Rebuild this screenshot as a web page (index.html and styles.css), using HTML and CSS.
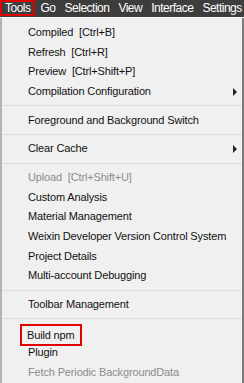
FILE: index.html
```html
<!DOCTYPE html>
<html lang="en">
<head>
    <meta charset="UTF-8">
    <title>Tools menu</title>
    <link rel="stylesheet" href="styles.css">
</head>
<body>
    <div class="menubar">
        <span class="menubar-item marked">Tools</span>
        <span class="menubar-item">Go</span>
        <span class="menubar-item">Selection</span>
        <span class="menubar-item">View</span>
        <span class="menubar-item">Interface</span>
        <span class="menubar-item">Settings</span>
    </div>

    <div class="menu">
        <div class="item">Compiled&nbsp; [Ctrl+B]</div>
        <div class="item">Refresh&nbsp; [Ctrl+R]</div>
        <div class="item">Preview&nbsp; [Ctrl+Shift+P]</div>
        <div class="item sub">Compilation Configuration</div>
        <div class="sep"></div>
        <div class="item">Foreground and Background Switch</div>
        <div class="sep"></div>
        <div class="item sub">Clear Cache</div>
        <div class="sep"></div>
        <div class="item disabled">Upload&nbsp; [Ctrl+Shift+U]</div>
        <div class="item">Custom Analysis</div>
        <div class="item">Material Management</div>
        <div class="item">Weixin Developer Version Control System</div>
        <div class="item">Project Details</div>
        <div class="item">Multi-account Debugging</div>
        <div class="sep"></div>
        <div class="item">Toolbar Management</div>
        <div class="sep"></div>
        <div class="item"><span class="marked">Build npm</span></div>
        <div class="item">Plugin</div>
        <div class="item disabled">Fetch Periodic BackgroundData</div>
    </div>
</body>
</html>
```

FILE: styles.css
```css
body {
    margin: 0;
    width: 244px;
    height: 383px;
    overflow: hidden;
    background: #f0f0f0;
    font-family: 'Liberation Sans', Arial, sans-serif;
}
.menubar {
    height: 17px;
    background: #3d3d3d;
    display: flex;
    align-items: flex-start;
    white-space: nowrap;
    overflow: hidden;
    color: #fff;
    font-size: 12px;
    letter-spacing: -0.5px;
    border-bottom: 1px solid #fafafa;
}
.menubar-item {
    margin-right: 9px;
    line-height: 16px;
}
.menubar-item.marked {
    border: 2px solid #e00000;
    padding: 0 2px 0 3px;
    margin-right: 6px;
    line-height: 12px;
    height: 12px;
}
.menu {
    box-sizing: border-box;
    height: 365px;
    overflow: hidden;
    border-left: 2px solid #b4b4b4;
    border-right: 2px solid #7c7c7c;
    background: #f0f0f0;
    padding-top: 5px;
}
.item {
    position: relative;
    height: 19.6px;
    line-height: 19.6px;
    padding-left: 26px;
    font-size: 11px;
    letter-spacing: -0.15px;
    color: #111;
    white-space: nowrap;
}
.item.disabled {
    color: #8c8c8c;
}
.item.sub::after {
    content: "";
    position: absolute;
    right: 5px;
    top: 6px;
    border-left: 4px solid #222;
    border-top: 4px solid transparent;
    border-bottom: 4px solid transparent;
}
.item .marked {
    display: inline-block;
    border: 2px solid #e00000;
    padding: 0 5px;
    margin-left: -8px;
    line-height: 18px;
}
.sep {
    height: 1px;
    background: #dcdcdc;
    margin: 4px 0 4.2px 0;
}
```
